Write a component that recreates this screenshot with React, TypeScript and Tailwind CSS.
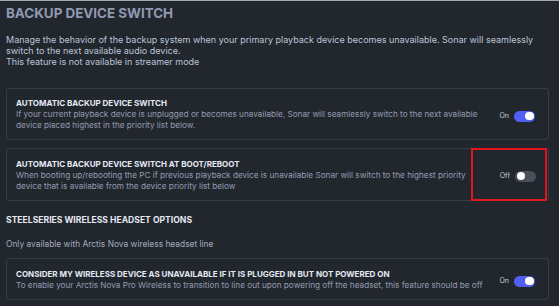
import React from "react";

function Toggle({ on }: { on: boolean }) {
  return (
    <div className="flex items-center gap-[5px]">
      <span className="text-[7px] text-[#c6cbd6]">{on ? "On" : "Off"}</span>
      <div
        className={
          on
            ? "w-[21px] h-[11px] rounded-full bg-[#5160f0] flex items-center justify-end px-[1.5px]"
            : "w-[21px] h-[11px] rounded-full bg-[#4a4f5b] flex items-center justify-start px-[1.5px]"
        }
      >
        <div className="w-[8.5px] h-[8.5px] rounded-full bg-white" />
      </div>
    </div>
  );
}

function Card({
  title,
  lines,
  on,
  highlight,
  className,
}: {
  title: string;
  lines: string[];
  on: boolean;
  highlight?: boolean;
  className?: string;
}) {
  return (
    <div
      className={
        "ml-[6px] mr-[10px] border border-[#373d47] rounded-[3px] flex items-stretch " +
        (className ?? "")
      }
    >
      <div className="flex-1 min-w-0 pl-[9px] flex flex-col justify-center py-[6px] whitespace-nowrap">
        <div className="text-[8px] font-bold text-[#e6eaf4] leading-[12px]">
          {title}
        </div>
        {lines.map((l, i) => (
          <div key={i} className="text-[8.2px] text-[#939cb0] leading-[11px]">
            {l}
          </div>
        ))}
      </div>
      {highlight ? (
        <div className="w-[76px] shrink-0 -my-px mr-px border-2 border-[#e0161c] flex items-center justify-end pr-[9px] pt-[3px]">
          <Toggle on={on} />
        </div>
      ) : (
        <div className="w-[76px] shrink-0 flex items-center justify-end pr-[13px] pt-[4px]">
          <Toggle on={on} />
        </div>
      )}
    </div>
  );
}

export default function App() {
  return (
    <div
      className="w-[559px] h-[306px] bg-[#22272e] border-t border-[#a4a9b0] overflow-hidden"
      style={{ fontFamily: "Inter, 'Noto Sans', sans-serif" }}
    >
      <div className="pl-[6px] pt-[4px] text-[13.4px] font-bold text-[#9199b0] leading-[16px]">
        BACKUP DEVICE SWITCH
      </div>
      <div className="pl-[6px] pt-[13px] text-[9px] text-[#bcc4d6] leading-[11px] whitespace-nowrap">
        <div>
          Manage the behavior of the backup system when your primary playback device becomes unavailable. Sonar will seamlessly
        </div>
        <div>switch to the next available audio device.</div>
        <div>This feature is not available in streamer mode</div>
      </div>
      <Card
        className="mt-[21px] h-[52px]"
        title="AUTOMATIC BACKUP DEVICE SWITCH"
        lines={[
          "If your current playback device is unplugged or becomes unavailable, Sonar will seamlessly switch to the next available",
          "device placed highest in the priority list below.",
        ]}
        on={true}
      />
      <div className="mt-[8px]">
        <Card
          className="h-[53px]"
          title="AUTOMATIC BACKUP DEVICE SWITCH AT BOOT/REBOOT"
          lines={[
            "When booting up/rebooting the PC if previous playback device is unavailable Sonar will switch to the highest priority",
            "device that is available from the device priority list below",
          ]}
          on={false}
          highlight
        />
      </div>
      <div className="pl-[6px] pt-[13px] text-[8.6px] font-bold text-[#e4e8f1] leading-[12px]">
        STEELSERIES WIRELESS HEADSET OPTIONS
      </div>
      <div className="pl-[6px] pt-[12px] text-[8.4px] text-[#a2aabc] leading-[12px]">
        Only available with Arctis Nova wireless headset line
      </div>
      <Card
        className="mt-[8px] h-[42px]"
        title="CONSIDER MY WIRELESS DEVICE AS UNAVAILABLE IF IT IS PLUGGED IN BUT NOT POWERED ON"
        lines={[
          "To enable your Arctis Nova Pro Wireless to transition to line out upon powering off the headset, this feature should be off",
        ]}
        on={true}
      />
    </div>
  );
}
